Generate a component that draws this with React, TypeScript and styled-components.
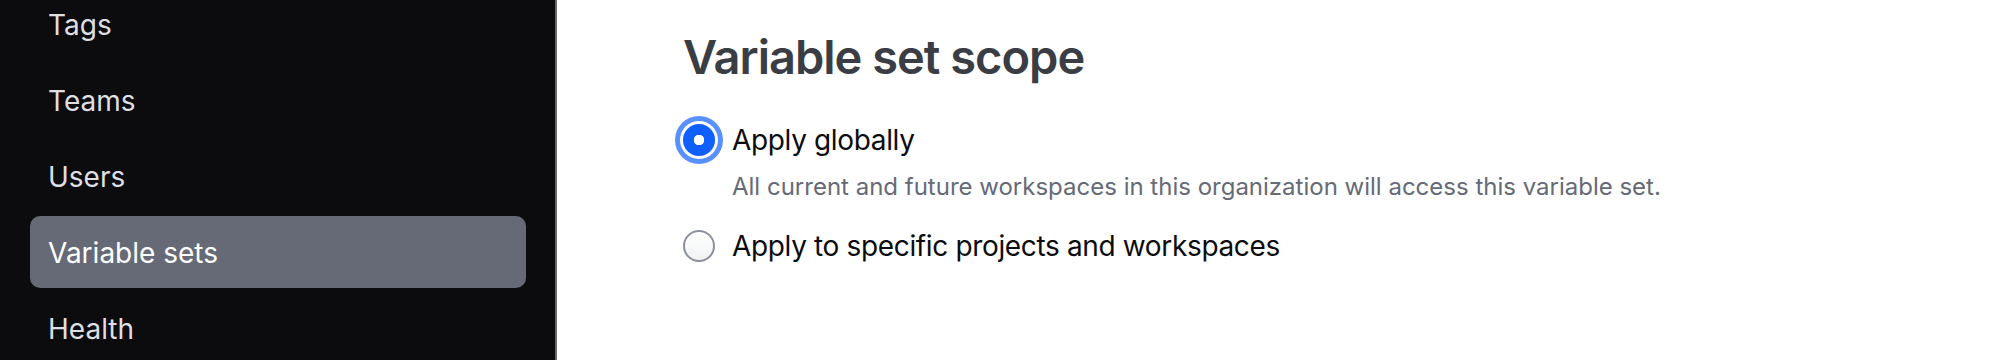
import React, { useState } from 'react';
import styled, { createGlobalStyle, css } from 'styled-components';

const GlobalStyle = createGlobalStyle`
  html, body {
    margin: 0;
    padding: 0;
    height: 100%;
    background: #ffffff;
    font-family: Inter, "Noto Sans", "Liberation Sans", sans-serif;
    -webkit-font-smoothing: antialiased;
  }
  #root {
    height: 100%;
  }
`;

const Page = styled.div`
  display: flex;
  height: 360px;
  overflow: hidden;
`;

const Sidebar = styled.nav`
  flex: 0 0 557px;
  box-sizing: border-box;
  background: #0c0c0e;
  border-right: 2px solid #656a76;
  padding: 0 29px 0 30px;
  overflow: hidden;
`;

const NavList = styled.ul`
  list-style: none;
  margin: -12px 0 0;
  padding: 0;
  display: flex;
  flex-direction: column;
  gap: 4px;
`;

const NavItem = styled.li<{ $active?: boolean }>`
  height: 72px;
  box-sizing: border-box;
  display: flex;
  align-items: center;
  padding: 2px 18px 0;
  border-radius: 10px;
  font-size: 28px;
  color: #dedfe3;

  ${({ $active }) =>
    $active &&
    css`
      background: #656a76;
      color: #ffffff;
    `}
`;

const Main = styled.main`
  flex: 1;
  padding: 27px 0 0 126px;
`;

const Heading = styled.h2`
  margin: 0;
  font-size: 47px;
  line-height: 60px;
  font-weight: 600;
  color: #3b3d45;
  letter-spacing: -1px;
`;

const Options = styled.fieldset`
  border: 0;
  margin: 33px 0 0;
  padding: 0;
  display: flex;
  flex-direction: column;
  gap: 19px;
`;

const Option = styled.div`
  display: grid;
  grid-template-columns: 32px 1fr;
  column-gap: 17px;
  align-items: center;
`;

const Radio = styled.input`
  appearance: none;
  margin: 0;
  width: 32px;
  height: 32px;
  border-radius: 50%;
  box-sizing: border-box;
  border: 2px solid #8c909c;
  background: linear-gradient(#ffffff, #f1f2f3);

  &:checked {
    border: none;
    background: radial-gradient(circle, #ffffff 0 5px, #1060ff 5.5px);
    box-shadow: 0 0 0 3px #ffffff, 0 0 0 8px #5990ff;
  }
`;

const Label = styled.label`
  font-size: 28px;
  line-height: 40px;
  letter-spacing: -0.35px;
  color: #0c0c0e;
`;

const Helper = styled.div`
  grid-column: 2;
  margin-top: 7px;
  font-size: 24px;
  line-height: 40px;
  color: #656a76;
`;

const navItems = ['Tags', 'Teams', 'Users', 'Variable sets', 'Health'];

const App = () => {
  const [scope, setScope] = useState('global');

  return (
    <>
      <GlobalStyle />
      <Page>
        <Sidebar>
          <NavList>
            {navItems.map((item) => (
              <NavItem key={item} $active={item === 'Variable sets'}>
                {item}
              </NavItem>
            ))}
          </NavList>
        </Sidebar>
        <Main>
          <Heading>Variable set scope</Heading>
          <Options>
            <Option>
              <Radio
                type="radio"
                id="scope-global"
                name="scope"
                checked={scope === 'global'}
                onChange={() => setScope('global')}
              />
              <Label htmlFor="scope-global">Apply globally</Label>
              <Helper>
                All current and future workspaces in this organization will access this variable set.
              </Helper>
            </Option>
            <Option>
              <Radio
                type="radio"
                id="scope-specific"
                name="scope"
                checked={scope === 'specific'}
                onChange={() => setScope('specific')}
              />
              <Label htmlFor="scope-specific">Apply to specific projects and workspaces</Label>
            </Option>
          </Options>
        </Main>
      </Page>
    </>
  );
};

export default App;
